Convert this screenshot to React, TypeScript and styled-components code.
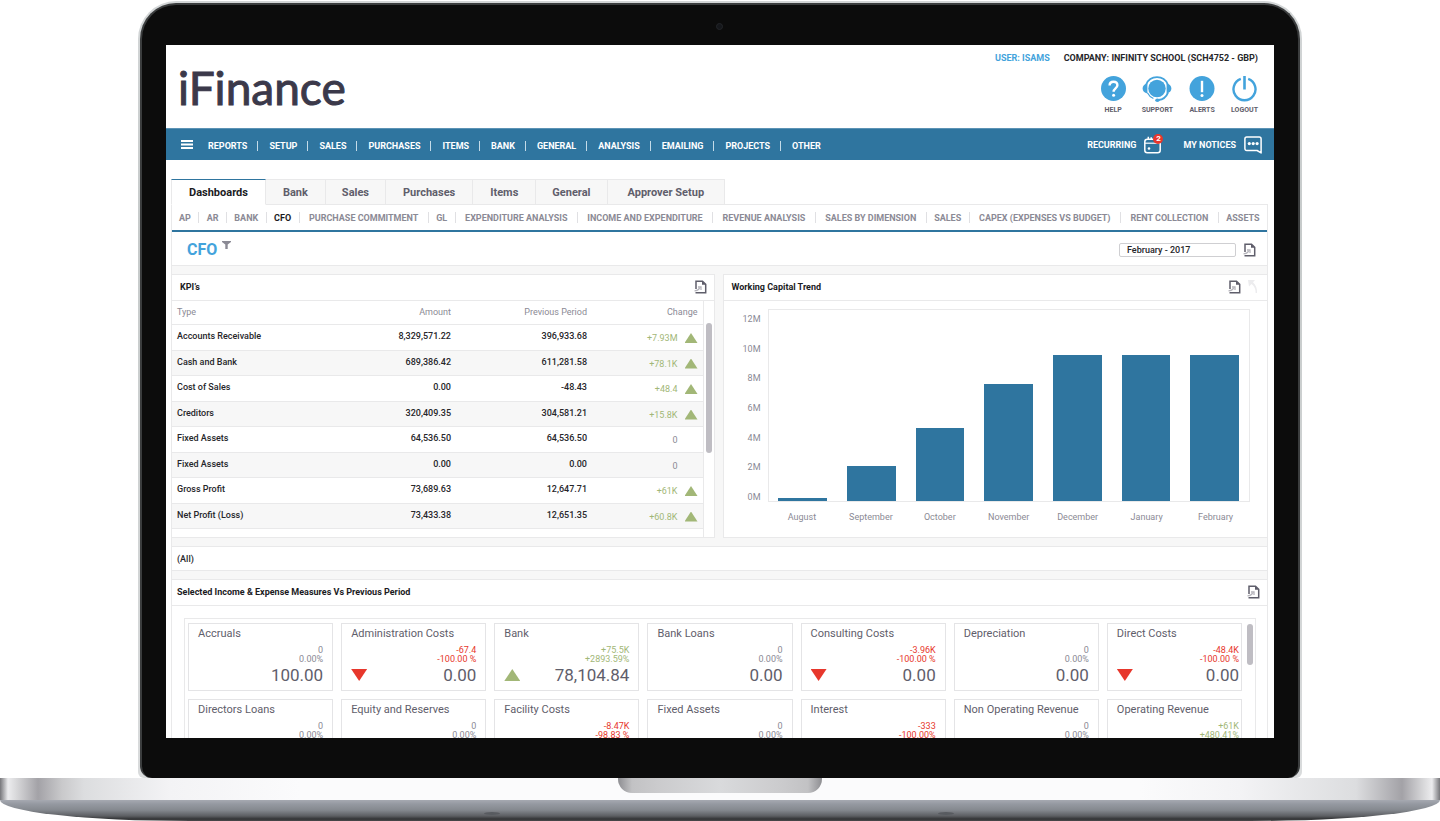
import React from "react";
import styled, { createGlobalStyle, css } from "styled-components";

const color = {
  blue: "#2f759f",
  sky: "#43a3dc",
  green: "#a2b777",
  red: "#e7372c",
  ink: "#26262a",
  slate: "#5f5e6b",
  muted: "#8b8a95",
  line: "#e9e9ea",
  band: "#f7f7f7",
};

const GlobalStyle = createGlobalStyle`
  *, *::before, *::after { box-sizing: border-box; }
  body {
    margin: 0;
    background: #fff;
    font-family: Roboto, "Liberation Sans", sans-serif;
    font-size: 9px;
    line-height: 12px;
    color: ${color.ink};
  }
  ul, h1, h2, h3, p { margin: 0; padding: 0; list-style: none; }
  button, select { font-family: inherit; }
  svg { display: block; }
`;

/* ---------- Laptop ---------- */

const Stage = styled.div`
  display: flex;
  flex-direction: column;
  min-width: 1200px;
  min-height: 100vh;
  overflow: hidden;
`;

const Lid = styled.div`
  flex: 1;
  display: flex;
  margin: 1px 138px 0;
  padding: 2px 2px 0;
  border-radius: 38px 38px 6px 6px;
  background: linear-gradient(to bottom, #d3d6d7, #c6caca 30%, #d9dbdc);
`;

const Bezel = styled.div`
  position: relative;
  flex: 1;
  display: flex;
  min-width: 0;
  padding: 40px 24px;
  border: 2px solid #3b3d3e;
  border-bottom: 0;
  border-radius: 36px 36px 12px 12px;
  background: #0c0c0c;
`;

const Camera = styled.span`
  position: absolute;
  top: 18px;
  left: 50%;
  width: 7px;
  height: 7px;
  margin-left: -4px;
  border: 1px solid #24262a;
  border-radius: 50%;
  background: #15171b;
`;

const Screen = styled.div`
  flex: 1;
  min-width: 0;
  height: calc(100vh - 128px);
  overflow: hidden;
  background: #fff;
`;

const Deck = styled.div`
  display: flex;
  justify-content: center;
  height: 22px;
  background: linear-gradient(
    to right,
    #77777b 0,
    #ececee 8px,
    #d9d9db 16px,
    #a3a2a7 38px,
    #c9c9cb 62px,
    #dcdddf 84px,
    #f3f3f5 170px,
    #fbfbfc 300px,
    #fbfbfc calc(100% - 300px),
    #f3f3f5 calc(100% - 200px),
    #dcdddf calc(100% - 84px),
    #a3a2a7 calc(100% - 38px),
    #d9d9db calc(100% - 16px),
    #ececee calc(100% - 8px),
    #77777b 100%
  );
`;

const Notch = styled.div`
  width: 204px;
  height: 15px;
  border-radius: 0 0 14px 14px;
  background: linear-gradient(to right, #8e8e92, #c2c2c4 14px, #cbcbcd 40px, #d9dadc 50%, #cbcbcd calc(100% - 40px), #c2c2c4 calc(100% - 14px), #8e8e92);
`;

const Underside = styled.div`
  display: flex;
  justify-content: space-between;
  align-items: flex-end;
  height: 21px;
  padding: 0 486px 6px 484px;
  border-radius: 0 0 190px 190px / 0 0 21px 21px;
  background: linear-gradient(to bottom, #a6a9b1, #9599a1 4px, #85898f 10px, #5c5e62 16px, #333436 19px, #4a4a4c);
`;

const Foot = styled.span`
  width: 16px;
  height: 3px;
  border-radius: 50%;
  background: #585b60;
`;

/* ---------- Application header ---------- */

const AppHeader = styled.header`
  display: flex;
  justify-content: space-between;
  height: 83px;
  padding: 7px 16px 0 12px;
`;

const Logo = styled.h1`
  padding-top: 10px;
  font: 400 46px/52px Lato, "Liberation Sans", sans-serif;
  color: #3b394a;
  -webkit-text-stroke: 1px #3b394a;
`;

const Account = styled.div`
  display: flex;
  flex-direction: column;
  align-items: flex-end;
  gap: 11px;
`;

const Identity = styled.p`
  display: flex;
  gap: 14px;
  font-weight: 700;
`;

const UserName = styled.span`
  color: ${color.sky};
`;

const Actions = styled.div`
  display: flex;
  gap: 16px;
`;

const Action = styled.button`
  display: flex;
  flex-direction: column;
  align-items: center;
  gap: 3px;
  padding: 0;
  border: 0;
  background: none;
  font-size: 7px;
  line-height: 10px;
  font-weight: 700;
  color: ${color.slate};
`;

const NavBar = styled.nav`
  display: flex;
  align-items: center;
  justify-content: space-between;
  height: 32px;
  padding: 0 12px 0 15px;
  border-top: 1px solid #5c93b5;
  background: ${color.blue};
`;

const NavGroup = styled.div`
  display: flex;
  align-items: center;
`;

const MenuButton = styled.button`
  display: flex;
  padding: 0;
  margin: 0 4px 0 0;
  border: 0;
  background: none;
`;

const NavList = styled.ul`
  display: flex;
  padding-top: 2px;
`;

const NavItem = styled.li`
  padding: 0 10px 0 11px;
  line-height: 10px;
  & + & { border-left: 1px solid #c4dbe8; }
`;

const NavLink = styled.a`
  font-size: 9px;
  font-weight: 700;
  color: #fff;
  text-decoration: none;
`;

const NavTool = styled.a`
  position: relative;
  display: flex;
  align-items: center;
  gap: 8px;
  margin-left: 22px;
  font-weight: 700;
  color: #fff;
  text-decoration: none;
`;

const Badge = styled.span`
  position: absolute;
  top: -2px;
  right: -2px;
  width: 10px;
  height: 10px;
  border-radius: 50%;
  background: ${color.red};
  font-size: 8px;
  line-height: 10px;
  text-align: center;
`;

/* ---------- Tabs ---------- */

const Workspace = styled.main`
  padding: 19px 6px 0 5px;
`;

const Tabs = styled.div`
  display: flex;
  height: 26px;
`;

const Tab = styled.button<{ $active?: boolean; $pad: number }>`
  padding: 2px ${(p) => p.$pad}px 0;
  border: 1px solid ${color.line};
  border-left-width: 0;
  background: ${color.band};
  font-size: 11px;
  line-height: 22px;
  font-weight: 700;
  color: ${color.slate};
  ${(p) =>
    p.$active &&
    css`
      border-left-width: 1px;
      border-top-color: ${color.blue};
      border-bottom-color: #fff;
      background: #fff;
      color: #1b1b1e;
    `}
`;

const TabEdge = styled.div`
  flex: 1;
  border-bottom: 1px solid ${color.line};
`;

const Sheet = styled.div`
  border: 1px solid ${color.line};
  border-top: 0;
`;

const SubNav = styled.ul`
  display: flex;
  justify-content: space-between;
  align-items: center;
  height: 27px;
  border-bottom: 2px solid ${color.blue};
`;

const Divider = styled.li`
  width: 1px;
  height: 11px;
  background: #e0e0e3;
`;

const SubItem = styled.li<{ $short: boolean }>`
  padding: 0 ${(p) => (p.$short ? 7 : 9)}px;
`;

const SubLink = styled.a<{ $active?: boolean }>`
  font-weight: 700;
  color: ${(p) => (p.$active ? "#1b1b1e" : color.muted)};
  text-decoration: none;
`;

const TitleRow = styled.div`
  display: flex;
  align-items: center;
  justify-content: space-between;
  height: 34px;
  padding: 2px 11px 0 15px;
  border-bottom: 1px solid ${color.line};
`;

const Title = styled.h2`
  display: flex;
  align-items: flex-start;
  gap: 5px;
  font-size: 16px;
  line-height: 18px;
  font-weight: 700;
  color: ${color.sky};
`;

const Tools = styled.div`
  display: flex;
  align-items: center;
  gap: 7px;
`;

const PeriodSelect = styled.select`
  appearance: none;
  width: 117px;
  height: 14px;
  padding: 0 7px;
  border: 1px solid #cfcfd2;
  border-radius: 2px;
  background: #fff;
  font-size: 9px;
  line-height: 12px;
  font-weight: 500;
  color: ${color.ink};
`;

const IconButton = styled.button`
  display: flex;
  padding: 0;
  border: 0;
  background: none;
`;

/* ---------- Panels ---------- */

const Board = styled.div`
  display: grid;
  grid-template-columns: 543fr 545fr;
  gap: 8px;
  padding-top: 8px;
  background: ${color.band};
`;

const Panel = styled.section<{ $span?: boolean }>`
  min-width: 0;
  border: 1px solid ${color.line};
  border-left-width: 0;
  background: #fff;
  & + & { border-left-width: 1px; border-right-width: 0; }
  ${(p) =>
    p.$span &&
    css`
      grid-column: 1 / -1;
      && { border-left-width: 0; border-right-width: 0; }
    `}
`;

const PanelHead = styled.div<{ $inset: number; $end: number }>`
  display: flex;
  align-items: center;
  justify-content: space-between;
  height: 26px;
  padding: 0 ${(p) => p.$end}px 2px ${(p) => p.$inset}px;
  border-bottom: 1px solid ${color.line};
`;

const PanelTitle = styled.h3`
  font-size: 9px;
  line-height: 12px;
  font-weight: 700;
  color: #1b1b1e;
`;

const TableWrap = styled.div`
  display: flex;
  height: 236px;
  overflow: hidden;
`;

const Table = styled.table`
  flex: 1;
  border-collapse: collapse;
  border-right: 1px solid ${color.line};
  table-layout: fixed;
`;

const HeadCell = styled.th<{ $end?: boolean }>`
  height: 23px;
  padding: 0 5px;
  border-bottom: 1px solid ${color.line};
  font-weight: 400;
  color: ${color.muted};
  text-align: ${(p) => (p.$end ? "right" : "left")};
`;

const Row = styled.tr`
  height: 26px;
  border-bottom: 1px solid ${color.line};
  &:nth-child(even) { height: 25px; background: ${color.band}; }
  &:last-child { height: 9px; background: #fff; }
`;

const Cell = styled.td<{ $end?: boolean }>`
  padding: 0 5px 2px;
  font-weight: 500;
  text-align: ${(p) => (p.$end ? "right" : "left")};
`;

const Change = styled.div<{ $up: boolean }>`
  display: flex;
  align-items: center;
  justify-content: flex-end;
  gap: 7px;
  padding-top: 4px;
  font-weight: 400;
  color: ${(p) => (p.$up ? color.green : color.muted)};
`;

const Track = styled.div<{ $top: number }>`
  width: 10px;
  padding: ${(p) => p.$top}px 2px 0;
`;

const Thumb = styled.div<{ $length: number }>`
  width: 6px;
  height: ${(p) => p.$length}px;
  border-radius: 3px;
  background: #bfbdc3;
`;

const Triangle = styled.span<{ $dir: "up" | "down" | "none"; $size?: "large" }>`
  width: ${(p) => (p.$size ? 16 : 13)}px;
  height: ${(p) => (p.$size ? 12 : 10)}px;
  background: ${(p) => (p.$dir === "up" ? color.green : p.$dir === "down" ? color.red : "transparent")};
  clip-path: ${(p) => (p.$dir === "down" ? "polygon(0 0, 100% 0, 50% 100%)" : "polygon(50% 0, 100% 100%, 0 100%)")};
`;

/* ---------- Chart ---------- */

const Chart = styled.div`
  display: grid;
  grid-template-columns: 37px 1fr;
  column-gap: 7px;
  padding: 8px 17px 0 0;
`;

const Scale = styled.ul`
  display: flex;
  flex-direction: column;
  justify-content: space-between;
  height: 194px;
  padding-top: 4px;
  text-align: right;
  color: ${color.muted};
`;

const Plot = styled.div`
  display: grid;
  grid-template-columns: repeat(7, 1fr);
  align-items: end;
  height: 193px;
  border: 1px solid ${color.line};
`;

const Bar = styled.div`
  justify-self: center;
  width: 71%;
  background: ${color.blue};
`;

const Months = styled.ul`
  grid-column: 2;
  display: grid;
  grid-template-columns: repeat(7, 1fr);
  padding-top: 8px;
  text-align: center;
  color: ${color.muted};
`;

/* ---------- Measures ---------- */

const FilterRow = styled.div`
  grid-column: 1 / -1;
  height: 25px;
  padding: 0 5px;
  border-top: 1px solid ${color.line};
  border-bottom: 1px solid ${color.line};
  background: #fff;
  line-height: 24px;
  font-weight: 500;
`;

const Gallery = styled.div`
  display: flex;
  gap: 3px;
  margin: 12px 11px 0 12px;
  padding: 4px 0 8px 3px;
  border: 1px solid ${color.line};
`;

const Cards = styled.div`
  flex: 1;
  display: grid;
  grid-template-columns: repeat(6, 145fr) 135fr;
  gap: 8px;
`;

const Card = styled.article`
  display: flex;
  flex-direction: column;
  min-width: 0;
  height: 68px;
  padding: 3px 9px 0;
  border: 1px solid #e4e4e6;
  &:nth-child(7n) { padding-right: 2px; }
`;

const CardTitle = styled.h3`
  padding-bottom: 6px;
  font-size: 11px;
  line-height: 13px;
  font-weight: 400;
  color: ${color.slate};
  white-space: nowrap;
`;

const Delta = styled.p<{ $dir: "up" | "down" | "none" }>`
  text-align: right;
  line-height: 9px;
  color: ${(p) => (p.$dir === "up" ? color.green : p.$dir === "down" ? color.red : color.muted)};
`;

const Total = styled.p`
  display: flex;
  align-items: center;
  justify-content: space-between;
  font-size: 17px;
  line-height: 22px;
  color: ${color.slate};
`;

/* ---------- Icons ---------- */

const HelpIcon = () => (
  <svg width="25" height="27" viewBox="0 0 25 27" aria-hidden="true">
    <circle cx="12.5" cy="13.5" r="12.5" fill={color.sky} />
    <path d="M8.6 10.6c0-2.3 1.6-3.8 3.9-3.8s3.9 1.4 3.9 3.5c0 3-3.8 3.2-3.8 6.4" fill="none" stroke="#fff" strokeWidth="2.4" />
    <circle cx="12.6" cy="20.3" r="1.5" fill="#fff" />
  </svg>
);

const SupportIcon = () => (
  <svg width="30" height="27" viewBox="0 0 30 27" aria-hidden="true">
    <circle cx="15" cy="13.5" r="8.7" fill={color.sky} />
    <path d="M4.2 9.5A11.6 11.6 0 0 1 25.8 9.5M26 17.6a11.6 11.6 0 0 1-9.6 7.4" fill="none" stroke={color.sky} strokeWidth="1.8" />
    <path d="M5.4 8.6v9.8C2.4 18 .6 16 .6 13.5s1.8-4.5 4.8-4.9zM24.6 8.6v9.8c3-.4 4.8-2.4 4.8-4.9s-1.8-4.5-4.8-4.9z" fill={color.sky} />
    <path d="M5.4 17.8c1.3 2.7 3.4 4.6 6 5.7" fill="none" stroke={color.sky} strokeWidth="1.2" />
    <ellipse cx="15.4" cy="25.2" rx="2.2" ry="1.7" fill={color.sky} />
  </svg>
);

const AlertIcon = () => (
  <svg width="26" height="27" viewBox="0 0 26 27" aria-hidden="true">
    <circle cx="13" cy="13.5" r="12.5" fill={color.sky} />
    <path d="M13 5.8v11.4" stroke="#fff" strokeWidth="2.4" />
    <circle cx="13" cy="20.6" r="1.5" fill="#fff" />
  </svg>
);

const LogoutIcon = () => (
  <svg width="25" height="27" viewBox="0 0 25 27" aria-hidden="true">
    <path d="M8.8 3.9a11 11 0 1 0 7.4 0" fill="none" stroke={color.sky} strokeWidth="2.4" />
    <path d="M12.5 1v13.5" stroke={color.sky} strokeWidth="2.6" />
  </svg>
);

const MenuIcon = () => (
  <svg width="12" height="9" viewBox="0 0 12 9" aria-hidden="true">
    <path d="M0 1h12M0 4.5h12M0 8h12" stroke="#fff" strokeWidth="1.9" />
  </svg>
);

const CalendarIcon = () => (
  <svg width="17" height="18" viewBox="0 0 17 18" fill="none" stroke="#fff" aria-hidden="true">
    <rect x=".8" y="3.3" width="15.4" height="13.4" rx="2.5" strokeWidth="1.5" />
    <path d="M1 7.2h15" strokeWidth="1.2" />
    <path d="M4.3 3.6V.8M7.2 3.6V1.2" strokeWidth="1.5" />
    <circle cx="5" cy="12.5" r="1.3" fill="#fff" stroke="none" />
  </svg>
);

const NoticeIcon = () => (
  <svg width="18" height="18" viewBox="0 0 18 18" aria-hidden="true">
    <path d="M2.8 1h12.4c1.2 0 1.9.7 1.9 1.9v14l-4-2.4H2.8C1.6 14.5.9 13.8.9 12.6V2.9C.9 1.7 1.6 1 2.8 1z" fill="none" stroke="#fff" strokeWidth="1.5" strokeLinejoin="round" />
    <circle cx="5.3" cy="7.6" r="1.6" fill="#fff" />
    <circle cx="9.2" cy="7.6" r="1.6" fill="#fff" />
    <circle cx="13.1" cy="7.6" r="1.6" fill="#fff" />
  </svg>
);

const FilterIcon = () => (
  <svg width="9" height="8" viewBox="0 0 9 8" aria-hidden="true">
    <path d="M0 0h9v1L5.7 3.5V8H3.300V3.500L0 1z" fill={color.muted} />
  </svg>
);

const ExportIcon = () => (
  <svg width="13" height="14" viewBox="0 0 13 14" aria-hidden="true">
    <path d="M2 9V1.3h6.5L11.7 4.3v8.4H1.5" fill="none" stroke={color.slate} strokeWidth="1.5" />
    <path d="M8 1v3.8h4z" fill={color.slate} />
    <path d="M.5 10.8c2.5 0 4-.8 5.2-2.6M4 7h3v3" fill="none" stroke="#b5b4bb" strokeWidth="1.3" />
  </svg>
);

const BackIcon = () => (
  <svg width="10" height="15" viewBox="0 0 10 15" aria-hidden="true">
    <path d="M0 1h7L5 3.3C8 6 9.3 9.5 9 14H7.6C7.8 10.3 6.5 7.3 3.5 5L1 7.5z" fill="#ececee" />
  </svg>
);

/* ---------- Data ---------- */

const navItems = ["REPORTS", "SETUP", "SALES", "PURCHASES", "ITEMS", "BANK", "GENERAL", "ANALYSIS", "EMAILING", "PROJECTS", "OTHER"];

const tabs = [
  { label: "Dashboards", pad: 17 },
  { label: "Bank", pad: 17 },
  { label: "Sales", pad: 16 },
  { label: "Purchases", pad: 17 },
  { label: "Items", pad: 17 },
  { label: "General", pad: 16 },
  { label: "Approver Setup", pad: 20 },
];

const subItems = [
  "AP", "AR", "BANK", "CFO", "PURCHASE COMMITMENT", "GL", "EXPENDITURE ANALYSIS", "INCOME AND EXPENDITURE",
  "REVENUE ANALYSIS", "SALES BY DIMENSION", "SALES", "CAPEX (EXPENSES VS BUDGET)", "RENT COLLECTION", "ASSETS",
];

const kpis = [
  ["Accounts Receivable", "8,329,571.22", "396,933.68", "+7.93M"],
  ["Cash and Bank", "689,386.42", "611,281.58", "+78.1K"],
  ["Cost of Sales", "0.00", "-48.43", "+48.4"],
  ["Creditors", "320,409.35", "304,581.21", "+15.8K"],
  ["Fixed Assets", "64,536.50", "64,536.50", "0"],
  ["Fixed Assets", "0.00", "0.00", "0"],
  ["Gross Profit", "73,689.63", "12,647.71", "+61K"],
  ["Net Profit (Loss)", "73,433.38", "12,651.35", "+60.8K"],
];

const scale = ["12M", "10M", "8M", "6M", "4M", "2M", "0M"];

const trend = [
  { month: "August", share: 1.5 },
  { month: "September", share: 18.3 },
  { month: "October", share: 38.2 },
  { month: "November", share: 61.5 },
  { month: "December", share: 76.4 },
  { month: "January", share: 76.4 },
  { month: "February", share: 76.4 },
];

type Measure = { name: string; delta: string; pct: string; dir: "up" | "down" | "none"; total?: string };

const measures: Measure[] = [
  { name: "Accruals", delta: "0", pct: "0.00%", dir: "none", total: "100.00" },
  { name: "Administration Costs", delta: "-67.4", pct: "-100.00 %", dir: "down", total: "0.00" },
  { name: "Bank", delta: "+75.5K", pct: "+2893.59%", dir: "up", total: "78,104.84" },
  { name: "Bank Loans", delta: "0", pct: "0.00%", dir: "none", total: "0.00" },
  { name: "Consulting Costs", delta: "-3.96K", pct: "-100.00 %", dir: "down", total: "0.00" },
  { name: "Depreciation", delta: "0", pct: "0.00%", dir: "none", total: "0.00" },
  { name: "Direct Costs", delta: "-48.4K", pct: "-100.00 %", dir: "down", total: "0.00" },
  { name: "Directors Loans", delta: "0", pct: "0.00%", dir: "none" },
  { name: "Equity and Reserves", delta: "0", pct: "0.00%", dir: "none" },
  { name: "Facility Costs", delta: "-8.47K", pct: "-98.83 %", dir: "down" },
  { name: "Fixed Assets", delta: "0", pct: "0.00%", dir: "none" },
  { name: "Interest", delta: "-333", pct: "-100.00%", dir: "down" },
  { name: "Non Operating Revenue", delta: "0", pct: "0.00%", dir: "none" },
  { name: "Operating Revenue", delta: "+61K", pct: "+480.41%", dir: "up" },
];

/* ---------- Page ---------- */

const Header = () => (
  <>
    <AppHeader>
      <Logo>iFinance</Logo>
      <Account>
        <Identity>
          <UserName>USER: ISAMS</UserName>
          <span>COMPANY: INFINITY SCHOOL (SCH4752 - GBP)</span>
        </Identity>
        <Actions>
          <Action><HelpIcon />HELP</Action>
          <Action><SupportIcon />SUPPORT</Action>
          <Action><AlertIcon />ALERTS</Action>
          <Action><LogoutIcon />LOGOUT</Action>
        </Actions>
      </Account>
    </AppHeader>
    <NavBar>
      <NavGroup>
        <MenuButton aria-label="Menu"><MenuIcon /></MenuButton>
        <NavList>
          {navItems.map((item) => (
            <NavItem key={item}><NavLink href="#">{item}</NavLink></NavItem>
          ))}
        </NavList>
      </NavGroup>
      <NavGroup>
        <NavTool href="#">RECURRING<CalendarIcon /><Badge>2</Badge></NavTool>
        <NavTool href="#">MY NOTICES<NoticeIcon /></NavTool>
      </NavGroup>
    </NavBar>
  </>
);

const KpiPanel = () => (
  <Panel>
    <PanelHead $inset={8} $end={7}>
      <PanelTitle>KPI’s</PanelTitle>
      <IconButton aria-label="Export"><ExportIcon /></IconButton>
    </PanelHead>
    <TableWrap>
      <Table>
        <colgroup>
          <col />
          <col width="26%" />
          <col width="136" />
          <col width="111" />
        </colgroup>
        <thead>
          <tr>
            <HeadCell scope="col">Type</HeadCell>
            <HeadCell scope="col" $end>Amount</HeadCell>
            <HeadCell scope="col" $end>Previous Period</HeadCell>
            <HeadCell scope="col" $end>Change</HeadCell>
          </tr>
        </thead>
        <tbody>
          {kpis.map(([type, amount, previous, change], i) => (
            <Row key={i}>
              <Cell>{type}</Cell>
              <Cell $end>{amount}</Cell>
              <Cell $end>{previous}</Cell>
              <Cell $end>
                <Change $up={change !== "0"}>
                  {change}
                  <Triangle $dir={change !== "0" ? "up" : "none"} />
                </Change>
              </Cell>
            </Row>
          ))}
          <Row><Cell colSpan={4} /></Row>
        </tbody>
      </Table>
      <Track $top={22}><Thumb $length={130} /></Track>
    </TableWrap>
  </Panel>
);

const TrendPanel = () => (
  <Panel>
    <PanelHead $inset={8} $end={9}>
      <PanelTitle>Working Capital Trend</PanelTitle>
      <Tools>
        <IconButton aria-label="Export"><ExportIcon /></IconButton>
        <IconButton aria-label="Back"><BackIcon /></IconButton>
      </Tools>
    </PanelHead>
    <Chart>
      <Scale>{scale.map((s) => <li key={s}>{s}</li>)}</Scale>
      <Plot>
        {trend.map((t) => <Bar key={t.month} style={{ height: `${t.share}%` }} />)}
      </Plot>
      <Months>{trend.map((t) => <li key={t.month}>{t.month}</li>)}</Months>
    </Chart>
  </Panel>
);

const MeasuresPanel = () => (
  <Panel $span>
    <PanelHead $inset={5} $end={7}>
      <PanelTitle>Selected Income &amp; Expense Measures Vs Previous Period</PanelTitle>
      <IconButton aria-label="Export"><ExportIcon /></IconButton>
    </PanelHead>
    <Gallery>
      <Cards>
        {measures.map((m) => (
          <Card key={m.name}>
            <CardTitle>{m.name}</CardTitle>
            <Delta $dir={m.dir}>{m.delta}</Delta>
            <Delta $dir={m.dir}>{m.pct}</Delta>
            {m.total && (
              <Total>
                <Triangle $dir={m.dir} $size="large" />
                {m.total}
              </Total>
            )}
          </Card>
        ))}
      </Cards>
      <Track $top={1}><Thumb $length={41} /></Track>
    </Gallery>
  </Panel>
);

export default function App() {
  return (
    <>
      <GlobalStyle />
      <Stage>
        <Lid>
          <Bezel>
            <Camera />
            <Screen>
              <Header />
              <Workspace>
                <Tabs>
                  {tabs.map((t, i) => (
                    <Tab key={t.label} $active={i === 0} $pad={t.pad}>{t.label}</Tab>
                  ))}
                  <TabEdge />
                </Tabs>
                <Sheet>
                  <SubNav>
                    {subItems.map((s, i) => (
                      <React.Fragment key={s}>
                        {i > 0 && <Divider role="presentation" />}
                        <SubItem $short={s.length < 7}>
                          <SubLink href="#" $active={s === "CFO"}>{s}</SubLink>
                        </SubItem>
                      </React.Fragment>
                    ))}
                  </SubNav>
                  <TitleRow>
                    <Title>CFO <FilterIcon /></Title>
                    <Tools>
                      <PeriodSelect aria-label="Period">
                        <option>February - 2017</option>
                      </PeriodSelect>
                      <IconButton aria-label="Export"><ExportIcon /></IconButton>
                    </Tools>
                  </TitleRow>
                  <Board>
                    <KpiPanel />
                    <TrendPanel />
                    <FilterRow>(All)</FilterRow>
                    <MeasuresPanel />
                  </Board>
                </Sheet>
              </Workspace>
            </Screen>
          </Bezel>
        </Lid>
        <Deck><Notch /></Deck>
        <Underside><Foot /><Foot /></Underside>
      </Stage>
    </>
  );
}
